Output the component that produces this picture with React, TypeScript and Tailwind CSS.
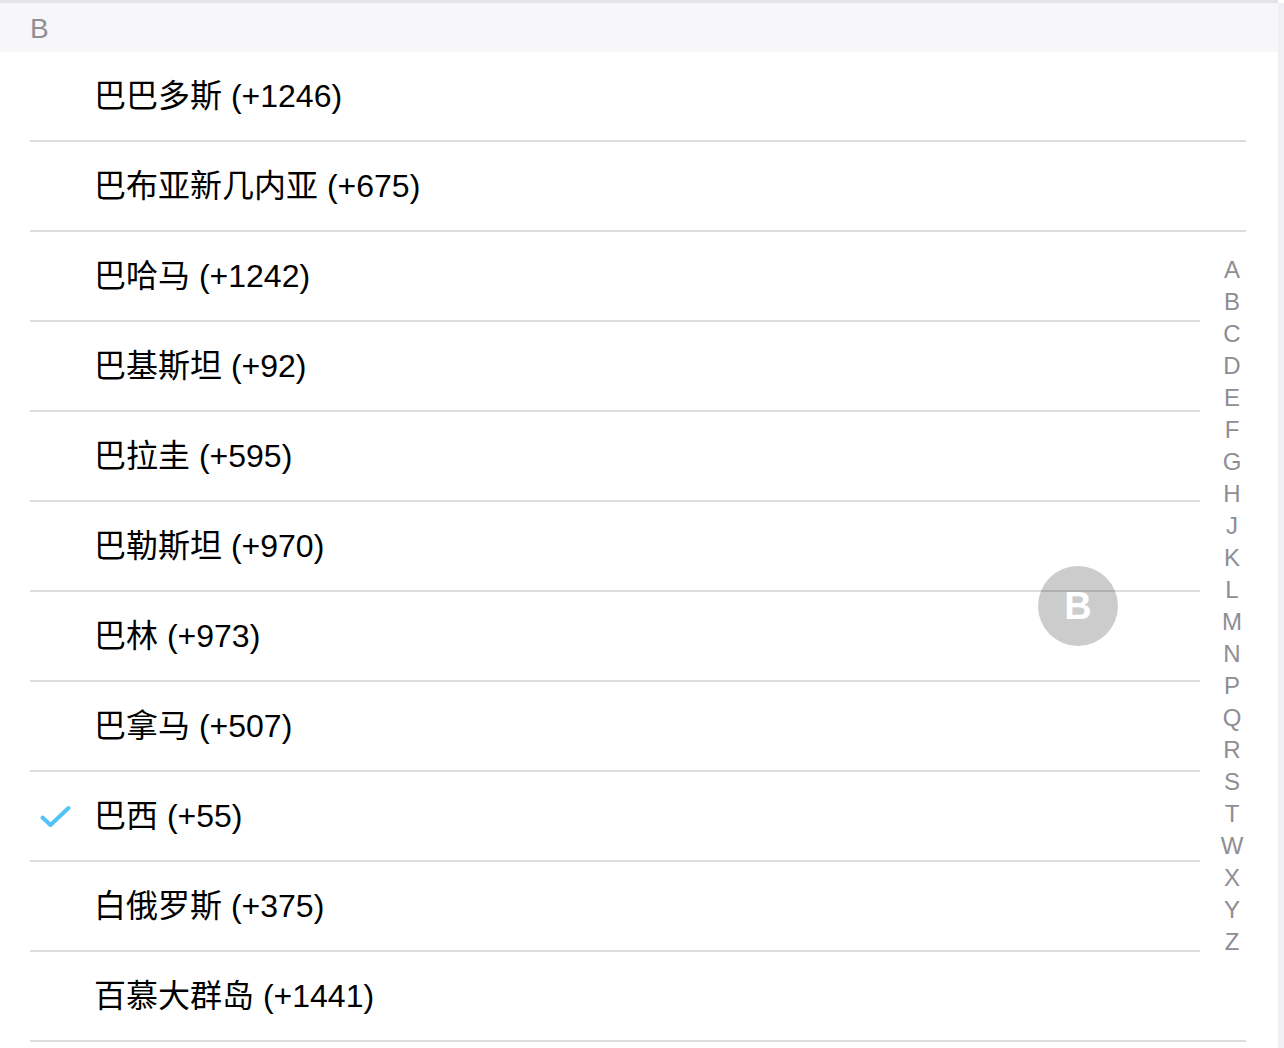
import React from "react";

const rows = [
  { name: "巴巴多斯 (+1246)" },
  { name: "巴布亚新几内亚 (+675)" },
  { name: "巴哈马 (+1242)" },
  { name: "巴基斯坦 (+92)" },
  { name: "巴拉圭 (+595)" },
  { name: "巴勒斯坦 (+970)" },
  { name: "巴林 (+973)" },
  { name: "巴拿马 (+507)" },
  { name: "巴西 (+55)", checked: true },
  { name: "白俄罗斯 (+375)" },
  { name: "百慕大群岛 (+1441)" },
];

const letters = "ABCDEFGHJKLMNPQRSTWXYZ".split("");

export default function App() {
  return (
    <div
      className="relative w-[1284px] h-[1048px] overflow-hidden bg-white flex"
      style={{ fontFamily: '"Liberation Sans", "Noto Sans CJK SC", sans-serif' }}
    >
      <div className="flex-1 flex flex-col border-t-[3px] border-[#e3e3e8]">
        <div className="h-[49px] bg-[#f7f7f9] flex items-center pl-[30px] pt-[2px] text-[28px] text-[#8e8e93]">
          B
        </div>
        {rows.map((r) => (
          <div key={r.name} className="relative h-[90px] ml-[30px] mr-[32px] border-b-2 border-[#dcdce1] flex items-center">
            <div className="w-[64px] flex items-center pl-[10px]">
              {r.checked && (
                <svg width="31" height="23" viewBox="0 0 31 23" fill="none">
                  <path d="M2.5 12.5 L10.5 20 L28.5 3" stroke="#52c3f7" strokeWidth="4" strokeLinecap="round" strokeLinejoin="round" />
                </svg>
              )}
            </div>
            <span className="text-[32px] text-black leading-none">{r.name}</span>
          </div>
        ))}
      </div>
      <div className="w-[6px] mt-[3px] bg-[#efeff4]" />

      <div className="absolute left-[1200px] top-[254px] w-[64px] bg-white flex flex-col">
        {letters.map((l) => (
          <div key={l} className="h-[32px] flex items-center justify-center text-[24px] text-[#8e8e93] leading-none">
            {l}
          </div>
        ))}
      </div>

      <div className="absolute left-[1038px] top-[566px] w-[80px] h-[80px] rounded-full bg-black/20 flex items-center justify-center text-white text-[38px] font-bold">
        B
      </div>
    </div>
  );
}
